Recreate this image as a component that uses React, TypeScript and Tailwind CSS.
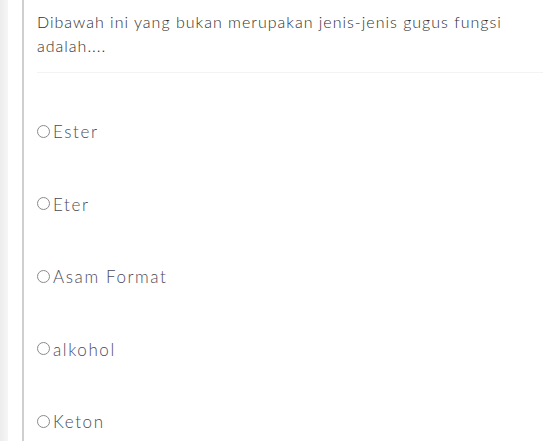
const options = ['Ester', 'Eter', 'Asam Format', 'alkohol', 'Keton'];

export default function App() {
  return (
    <div className="h-[441px] w-[543px] overflow-hidden flex bg-white" style={{ fontFamily: '"Lato", sans-serif' }}>
      <div className="w-[8px] shrink-0 bg-gradient-to-r from-[#ececec] to-[#f6f6f6]" />
      <div className="w-[14px] shrink-0 bg-white" />
      <div className="w-[2px] shrink-0 bg-[#cfcfcf]" />
      <div className="flex-1 pl-[13px]">
        <p className="pt-[10px] pr-[20px] text-[16px] leading-[24px] tracking-[1px] font-light text-[#2f2f2f]">
          Dibawah ini yang bukan merupakan jenis-jenis gugus fungsi adalah....
        </p>
        <div className="mt-[14px] h-[1px] bg-[#f3f3f3]" />
        <div className="pt-[48px] flex flex-col gap-[50.5px]">
          {options.map((o) => (
            <label key={o} className="flex items-center h-[22px]">
              <span className="w-[13px] h-[13px] rounded-full border border-[#8a8a8a] mr-[3px] -translate-y-[1px]" />
              <span className="text-[17px] tracking-[1.6px] font-light text-[#4a4a5a]">{o}</span>
            </label>
          ))}
        </div>
      </div>
    </div>
  );
}
